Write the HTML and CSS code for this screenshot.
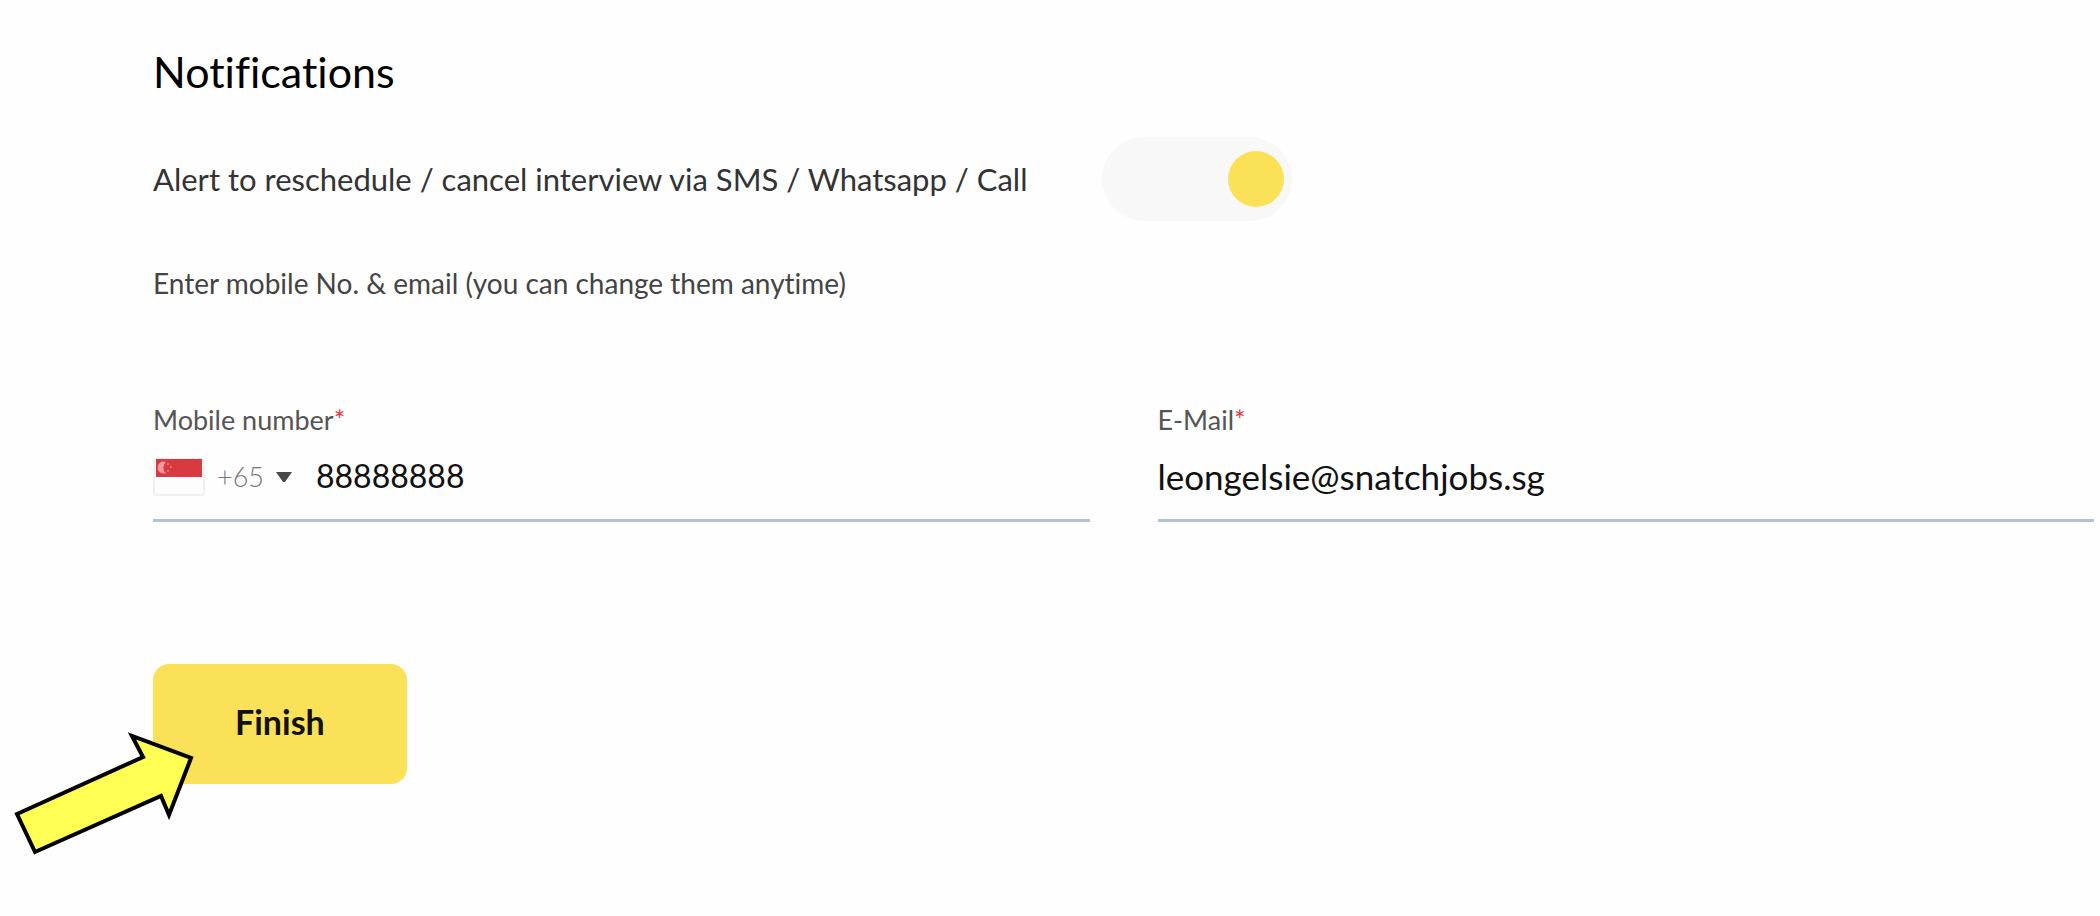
FILE: index.html
```
<!DOCTYPE html>
<html lang="en">
<head>
<meta charset="utf-8">
<meta name="viewport" content="width=device-width, initial-scale=1">
<title>Notifications</title>
<link rel="stylesheet" href="styles.css">
</head>
<body>
<main class="page">
  <form class="form">
    <h1 class="title">Notifications</h1>
    <div class="alert-row">
      <label class="alert-label" for="alerts">Alert to reschedule / cancel interview via SMS / Whatsapp / Call</label>
      <input class="toggle" id="alerts" type="checkbox" role="switch" checked>
    </div>
    <p class="hint">Enter mobile No. &amp; email (you can change them anytime)</p>
    <div class="fields">
      <div class="field">
        <label class="field-label" for="mobile">Mobile number<span class="required">*</span></label>
        <div class="control">
          <button class="country" type="button" aria-label="Country code +65">
            <svg class="flag" viewBox="0 0 52 38" aria-hidden="true">
              <rect x="1" y="1" width="50" height="36" rx="3" fill="#fdfdfd" stroke="#f0f0f0" stroke-width="2"/>
              <path d="M3 1h46v18H3z" fill="#d93a40"/>
              <path d="M13 4a6 6 0 1 0 0 11a7 7 0 0 1 0-11z" fill="#ee9a9d"/>
              <path d="M14 5h2v2h-2zM14 12h2v2h-2zM17 8h2v2h-2z" fill="#e4686d"/>
            </svg>
            <span class="code">+65</span>
            <svg class="caret" viewBox="0 0 16 10" aria-hidden="true"><path d="M0 0h16L9 10H7z" fill="#484848"/></svg>
          </button>
          <input class="input input-tel" id="mobile" type="tel" value="88888888">
        </div>
      </div>
      <div class="field">
        <label class="field-label" for="email">E-Mail<span class="required">*</span></label>
        <div class="control">
          <input class="input" id="email" type="email" value="leongelsie@snatchjobs.sg">
        </div>
      </div>
    </div>
    <div class="actions">
      <button class="finish" type="submit">Finish</button>
      <svg class="pointer" viewBox="0 0 184 126" aria-hidden="true">
        <path d="M5 83L131 26L120 5L179 27L157 84L149 65L23 121Z" fill="#ffff54" stroke="#000" stroke-width="4"/>
      </svg>
    </div>
  </form>
</main>
</body>
</html>
```
FILE: styles.css
```
* {
  box-sizing: border-box;
}

body {
  margin: 0;
  background: #fefefe;
  color: #000;
  font-family: Lato, "Liberation Sans", sans-serif;
  font-variant-ligatures: none;
}

.page {
  min-height: 100vh;
  padding: 48px 6px 96px 153px;
}

.title {
  margin: 0;
  font-size: 43px;
  line-height: 48px;
  font-weight: 400;
}

.alert-row {
  display: flex;
  align-items: center;
  gap: 75px;
  margin-top: 41px;
}

.alert-label {
  color: #333;
  font-size: 31px;
  line-height: 36px;
}

.toggle {
  appearance: none;
  flex: none;
  display: flex;
  align-items: center;
  width: 190px;
  height: 84px;
  margin: 0;
  padding: 0 8px;
  border-radius: 42px;
  background: #f8f8f8;
  cursor: pointer;
}

.toggle::before {
  content: "";
  width: 56px;
  height: 56px;
  border-radius: 50%;
  background: #fbe157;
}

.toggle:checked {
  justify-content: flex-end;
}

.hint {
  margin: 46px 0 0;
  color: #444;
  font-size: 28px;
  line-height: 32px;
}

.fields {
  display: grid;
  grid-template-columns: 1fr 1fr;
  gap: 68px;
  margin-top: 105px;
}

.field-label {
  display: block;
  color: #555;
  font-size: 27px;
  line-height: 32px;
}

.required {
  color: #f0303c;
}

.control {
  display: flex;
  align-items: center;
  gap: 24px;
  height: 86px;
  padding-bottom: 2px;
  border-bottom: 3px solid #b4c2d3;
}

.country {
  display: flex;
  align-items: center;
  gap: 12px;
  padding: 0;
  border: 0;
  background: none;
  color: #777;
  font: inherit;
}

.flag {
  width: 52px;
  height: 38px;
}

.code {
  font-size: 27px;
  font-weight: 300;
}

.caret {
  width: 16px;
  height: 10px;
}

.input {
  flex: 1;
  min-width: 0;
  padding: 0 0 2px;
  border: 0;
  outline: 0;
  background: none;
  color: #111;
  font: inherit;
  font-size: 35px;
}

.input-tel {
  font-size: 32px;
}

.actions {
  position: relative;
  display: flex;
  margin-top: 142px;
}

.finish {
  padding: 38px 82px 42px;
  border: 0;
  border-radius: 16px;
  background: #fbe157;
  color: #111;
  font: inherit;
  font-size: 34px;
  line-height: 40px;
  font-weight: 700;
}

.pointer {
  position: absolute;
  top: 67px;
  left: -141px;
  width: 184px;
  height: 126px;
}
```
